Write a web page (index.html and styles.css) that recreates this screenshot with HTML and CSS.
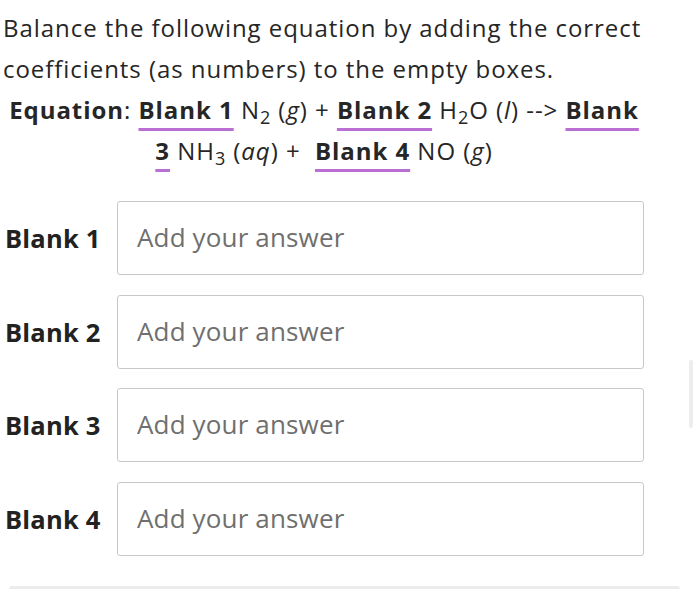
FILE: index.html
```html
<!DOCTYPE html>
<html>
<head>
<meta charset="utf-8">
<link rel="stylesheet" href="styles.css">
</head>
<body>
<div class="page">
  <p class="question">Balance the following equation by adding the correct coefficients (as numbers) to the empty boxes.</p>
  <p class="equation"><b>Equation</b>: <b class="blank">Blank 1</b> N<sub>2</sub> (<i>g</i>) + <b class="blank">Blank 2</b> H<sub>2</sub>O (<i>l</i>) --&gt; <b class="blank">Blank 3</b> NH<sub>3</sub> (<i>aq</i>) +&nbsp; <b class="blank">Blank 4</b> NO (<i>g</i>)</p>
  <div class="answers">
    <label class="label" for="b1">Blank 1</label><input id="b1" class="answer" placeholder="Add your answer">
    <label class="label" for="b2">Blank 2</label><input id="b2" class="answer" placeholder="Add your answer">
    <label class="label" for="b3">Blank 3</label><input id="b3" class="answer" placeholder="Add your answer">
    <label class="label" for="b4">Blank 4</label><input id="b4" class="answer" placeholder="Add your answer">
  </div>
  <div class="next-card"></div>
</div>
<div class="scroll-thumb"></div>
</body>
</html>
```

FILE: styles.css
```css
html, body {
  margin: 0;
  padding: 0;
  overflow: hidden;
  background: #fff;
}
body {
  font-family: "Open Sans", "Noto Sans", sans-serif;
  color: #222;
}
.page {
  width: 642px;
  padding: 7px 0 0 3px;
}
.question {
  margin: 0;
  font-size: 24px;
  line-height: 41px;
  letter-spacing: 0.95px;
  color: #262626;
}
.equation {
  margin: 0;
  font-size: 24px;
  line-height: 41px;
  letter-spacing: 0.95px;
  text-align: center;
  color: #262626;
}
.equation b {
  font-weight: 700;
}
.equation sub {
  font-size: 0.75em;
  line-height: 0;
  vertical-align: -0.25em;
}
.blank {
  text-decoration: underline;
  text-decoration-color: #bb6fd3;
  text-decoration-thickness: 3px;
  text-underline-offset: 9px;
}
.answers {
  margin-top: 30px;
  display: grid;
  grid-template-columns: 114px 527px;
  row-gap: 19.5px;
  align-items: center;
}
.label {
  font-size: 25.5px;
  font-weight: 700;
  letter-spacing: 0.2px;
  color: #222;
  padding-left: 2px;
}
.answer {
  box-sizing: border-box;
  height: 74px;
  border: 1px solid #c8c8c8;
  border-radius: 3px;
  padding: 0 0 2px 19px;
  font-family: "Open Sans", "Noto Sans", sans-serif;
  font-size: 26px;
  letter-spacing: 0.15px;
  color: #222;
  outline: none;
  margin: 0;
}
.answer::placeholder {
  color: #6f6f6f;
  opacity: 1;
}
.next-card {
  margin: 30px 0 0 6px;
  width: 671px;
  height: 12px;
  background: #ececec;
  border-radius: 3px 3px 0 0;
}
.scroll-thumb {
  position: fixed;
  left: 689px;
  top: 360px;
  width: 4px;
  height: 68px;
  background: #ededed;
  border-radius: 2px;
}
```
